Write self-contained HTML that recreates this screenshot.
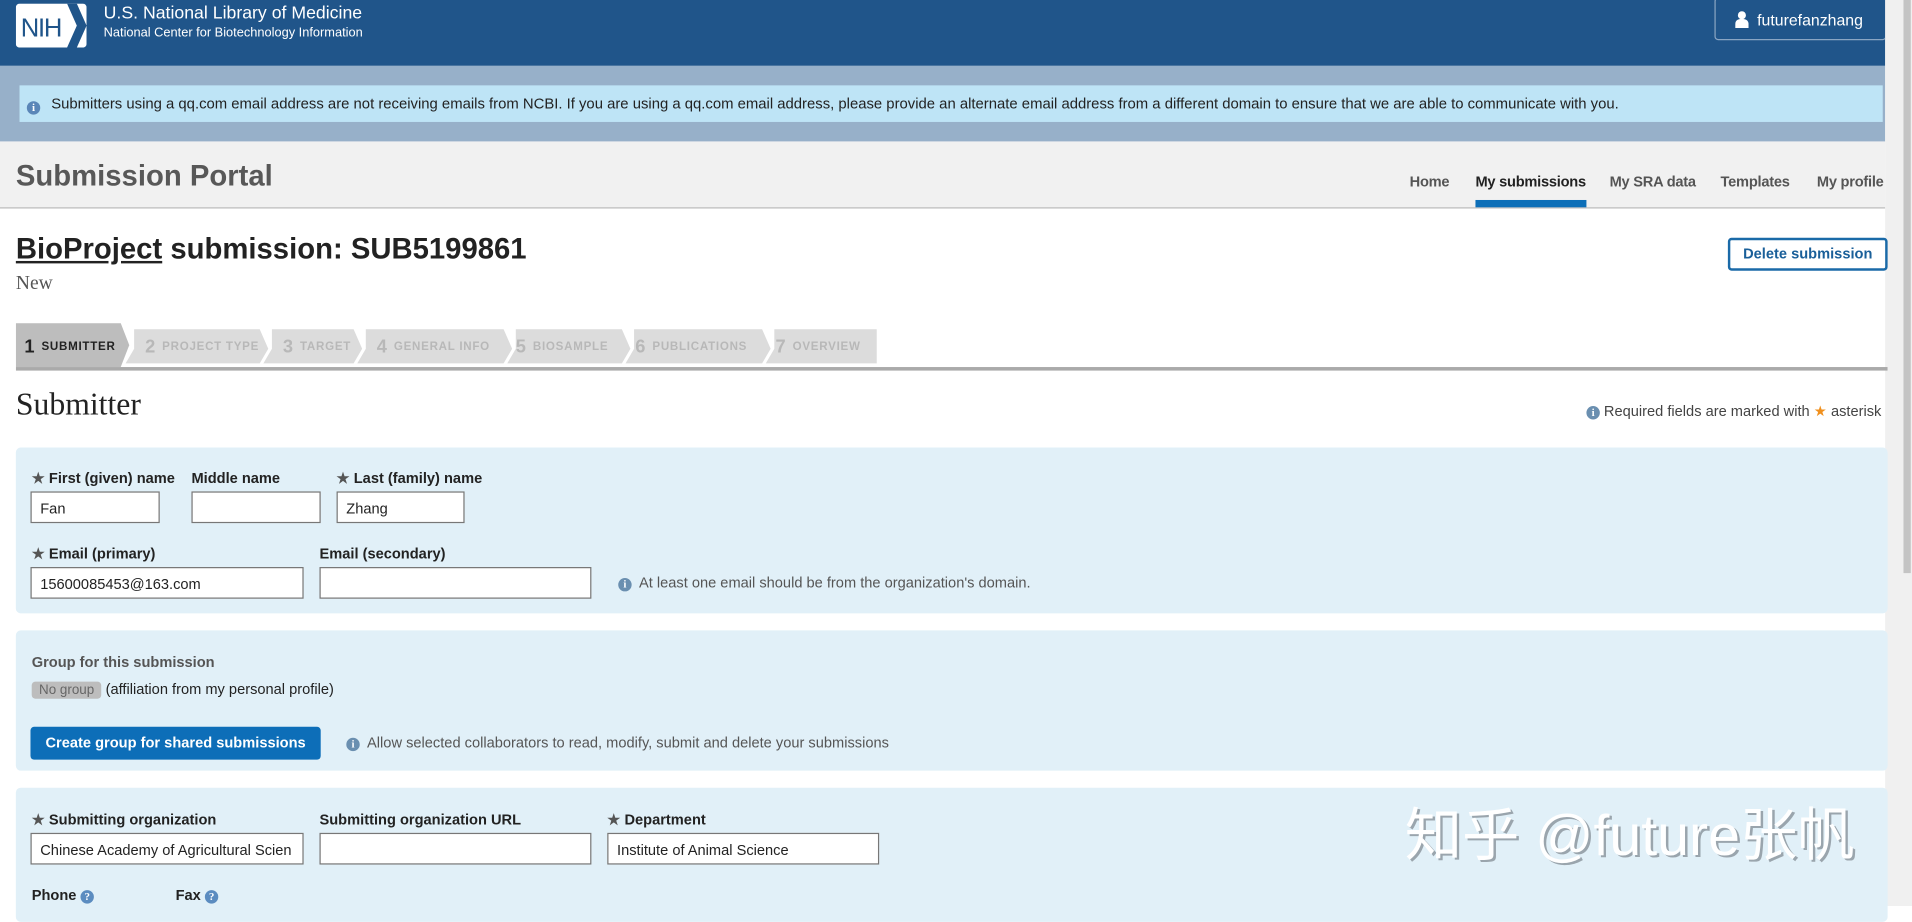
<!DOCTYPE html>
<html><head><meta charset="utf-8"><style>
*{box-sizing:border-box;margin:0;padding:0}
html,body{width:1912px;height:906px;overflow:hidden;background:#fff}
#w{position:absolute;left:0;top:0;width:1568px;height:743px;transform:scale(1.21939);transform-origin:0 0;font-family:"Liberation Sans",sans-serif;color:#222}
.a{position:absolute;white-space:nowrap}
.hdr{left:0;top:0;width:1546px;height:54px;background:#20558a}
.band{left:0;top:54px;width:1546px;height:62px;background:#97b0c9}
.alert{left:16px;top:70px;width:1528px;height:30px;background:#bee4f6}
.portal{left:0;top:116px;width:1546px;height:55px;background:#f1f1f1;border-bottom:1px solid #bbb}
.nav{top:142px;font-size:12px;font-weight:bold;color:#555;letter-spacing:-0.2px}
.panel{background:#e1f0f8;border-radius:4px;left:13px;width:1535px}
.lbl{font-size:12px;font-weight:bold;color:#222}
.inp{background:#fff;border:1px solid #777;height:26px;font-size:12px;padding:6px 7px;color:#222}
.st{color:#555}
.info{display:inline-block;width:11px;height:11px;border-radius:50%;background:#6a8fb0;color:#fff;font-size:9px;font-weight:bold;text-align:center;line-height:11px;font-family:"Liberation Serif",serif;vertical-align:0}
</style></head><body><div id="w">
<div class="a hdr"></div>
<svg class="a" style="left:13px;top:3px" width="58" height="36" viewBox="0 0 58 36"><rect x="0" y="0" width="58" height="36" rx="3" fill="#fff"/><path d="M42 0h8l8 18-8 18h-8l8-18z" fill="#20558a"/><text x="4" y="27" font-family="Liberation Sans" font-size="21" fill="#20558a" letter-spacing="-1">NIH</text></svg>
<div class="a" style="left:85px;top:3px;font-size:14.5px;color:#fff">U.S. National Library of Medicine</div>
<div class="a" style="left:85px;top:21px;font-size:10.5px;color:#fff">National Center for Biotechnology Information</div>
<div class="a" style="left:1406px;top:-2px;width:141px;height:35px;border:1px solid #8aa5c3;border-radius:3px;color:#fff;font-size:13px;padding:10px 0 0 34px">futurefanzhang</div>
<svg class="a" style="left:1423px;top:9px" width="11" height="14" viewBox="0 0 11 14"><circle cx="5.5" cy="3.5" r="3.3" fill="#fff"/><path d="M0 14v-3c0-3 2-4.5 5.5-4.5S11 8 11 11v3z" fill="#fff"/></svg>
<div class="a band"></div>
<div class="a alert"></div>
<div class="a" style="left:22px;top:78px"><span class="info" style="background:#5a86b8">i</span></div>
<div class="a" style="left:42px;top:78px;font-size:12.2px;color:#222">Submitters using a qq.com email address are not receiving emails from NCBI. If you are using a qq.com email address, please provide an alternate email address from a different domain to ensure that we are able to communicate with you.</div>
<div class="a portal"></div>
<div class="a" style="left:13px;top:131px;font-size:24px;font-weight:bold;color:#585858">Submission Portal</div>
<div class="a nav" style="left:1156px">Home</div>
<div class="a nav" style="left:1210px;color:#222">My submissions</div>
<div class="a" style="left:1210px;top:164px;width:91px;height:6px;background:#0d6fb8"></div>
<div class="a nav" style="left:1320px">My SRA data</div>
<div class="a nav" style="left:1411px">Templates</div>
<div class="a nav" style="left:1490px">My profile</div>
<div class="a" style="left:1546px;top:0;width:22px;height:743px;background:#f0f0f0"></div>
<div class="a" style="left:1561px;top:0;width:6px;height:470px;background:#c4c4c4"></div>
<div class="a" style="left:13px;top:191px;font-size:24px;font-weight:bold;color:#222"><span style="text-decoration:underline">BioProject</span> submission: SUB5199861</div>
<div class="a" style="left:13px;top:224px;font-size:16px;color:#555;font-family:'Liberation Serif',serif">New</div>
<div class="a" style="left:1417px;top:195px;width:131px;height:27px;border:2px solid #1a6aa8;border-radius:3px;color:#1a5f99;font-size:12px;font-weight:bold;text-align:center;line-height:23px">Delete submission</div>
<svg class="a" style="left:13px;top:265px" width="1535" height="39" viewBox="0 0 1535 39">
<g fill="#dcdcdc"><polygon points="97,5 200,5 207,21 200,33 90,33 97,21"/><polygon points="210,5 277,5 284,21 277,33 203,33 210,21"/><polygon points="287,5 400,5 407,21 400,33 280,33 287,21"/><polygon points="410,5 497,5 504,21 497,33 403,33 410,21"/><polygon points="507,5 612,5 619,21 612,33 500,33 507,21"/><polygon points="622,5 706,5 706,33 615,33 622,21"/></g>
<polygon points="0,0 86,0 93,18 86,36 0,36" fill="#bdbdbd"/>
<rect x="0" y="36" width="1535" height="3" fill="#aaa"/>
<g font-family="Liberation Sans" font-weight="bold"><text x="7" y="24" font-size="15" fill="#222">1</text><text x="21" y="22" font-size="9.5" fill="#222" letter-spacing=".6">SUBMITTER</text>
<g fill="#b8b8b8"><text x="106" y="24" font-size="15">2</text><text x="120" y="22" font-size="9.5" letter-spacing=".6">PROJECT TYPE</text>
<text x="219" y="24" font-size="15">3</text><text x="233" y="22" font-size="9.5" letter-spacing=".6">TARGET</text>
<text x="296" y="24" font-size="15">4</text><text x="310" y="22" font-size="9.5" letter-spacing=".6">GENERAL INFO</text>
<text x="410" y="24" font-size="15">5</text><text x="424" y="22" font-size="9.5" letter-spacing=".6">BIOSAMPLE</text>
<text x="508" y="24" font-size="15">6</text><text x="522" y="22" font-size="9.5" letter-spacing=".6">PUBLICATIONS</text>
<text x="623" y="24" font-size="15">7</text><text x="637" y="22" font-size="9.5" letter-spacing=".6">OVERVIEW</text></g></g></svg>
<div class="a" style="left:13px;top:317px;font-size:26px;font-family:'Liberation Serif',serif;color:#222">Submitter</div>
<div class="a" style="left:1301px;top:330px;font-size:12px;color:#444"><span class="info">i</span> Required fields are marked with <span style="color:#f0901e">★</span> asterisk</div>

<div class="a panel" style="top:367px;height:136px"></div>
<div class="a lbl" style="left:26px;top:385px"><span class="st">★</span> First (given) name</div>
<div class="a lbl" style="left:157px;top:385px">Middle name</div>
<div class="a lbl" style="left:276px;top:385px"><span class="st">★</span> Last (family) name</div>
<div class="a inp" style="left:25px;top:403px;width:106px">Fan</div>
<div class="a inp" style="left:157px;top:403px;width:106px"></div>
<div class="a inp" style="left:276px;top:403px;width:105px">Zhang</div>
<div class="a lbl" style="left:26px;top:447px"><span class="st">★</span> Email (primary)</div>
<div class="a lbl" style="left:262px;top:447px">Email (secondary)</div>
<div class="a inp" style="left:25px;top:465px;width:224px">15600085453@163.com</div>
<div class="a inp" style="left:262px;top:465px;width:223px"></div>
<div class="a" style="left:507px;top:471px;font-size:12px;color:#555"><span class="info">i</span>&nbsp; At least one email should be from the organization's domain.</div>

<div class="a panel" style="top:517px;height:115px"></div>
<div class="a lbl" style="left:26px;top:536px;color:#555">Group for this submission</div>
<div class="a" style="left:26px;top:558px;font-size:12px;color:#222"><span style="background:#bdbdbd;color:#666;border-radius:3px;padding:1px 6px;font-size:11px">No group</span> (affiliation from my personal profile)</div>
<div class="a" style="left:25px;top:596px;width:238px;height:27px;background:#0d6eb8;border-radius:3px;color:#fff;font-size:12px;font-weight:bold;text-align:center;line-height:27px">Create group for shared submissions</div>
<div class="a" style="left:284px;top:602px;font-size:12px;color:#555"><span class="info">i</span>&nbsp; Allow selected collaborators to read, modify, submit and delete your submissions</div>

<div class="a panel" style="top:646px;height:110px"></div>
<div class="a lbl" style="left:26px;top:665px"><span class="st">★</span> Submitting organization</div>
<div class="a lbl" style="left:262px;top:665px">Submitting organization URL</div>
<div class="a lbl" style="left:498px;top:665px"><span class="st">★</span> Department</div>
<div class="a inp" style="left:25px;top:683px;width:224px;overflow:hidden">Chinese Academy of Agricultural Scien</div>
<div class="a inp" style="left:262px;top:683px;width:223px"></div>
<div class="a inp" style="left:498px;top:683px;width:223px">Institute of Animal Science</div>
<div class="a lbl" style="left:26px;top:727px">Phone <span class="info" style="background:#5b8cc0">?</span></div>
<div class="a lbl" style="left:144px;top:727px">Fax <span class="info" style="background:#5b8cc0">?</span></div>
<div class="a" style="left:1152px;top:646px;font-size:47px;color:#fff;text-shadow:2px 2px 0 #9aa5ad;font-family:'Liberation Sans','Noto Sans CJK SC',sans-serif">知乎 @future张帆</div>
</div></body></html>
